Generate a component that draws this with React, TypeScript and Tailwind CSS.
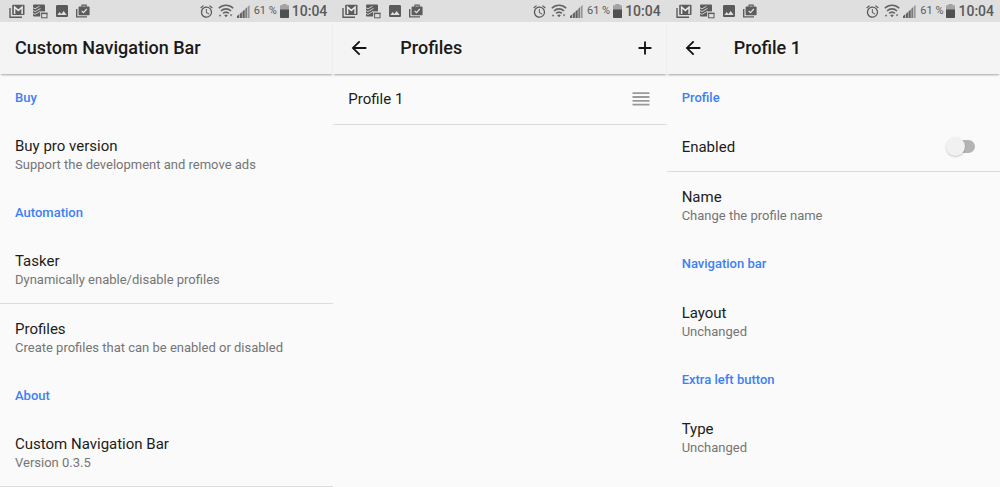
import React, { useState } from 'react';
import { MdAdd, MdAlarm, MdArrowBack, MdImage } from 'react-icons/md';

/* Status bar icons */

const MailStackIcon = () => (
  <svg width="16" height="15" viewBox="0 0 16 15" fill="none" aria-hidden="true">
    <path d="M1 4V13.3H13" stroke="#5c5c5c" strokeWidth="1.4" />
    <rect x="3.2" y="0.8" width="12.3" height="10.2" rx="0.8" fill="#5c5c5c" />
    <path d="M5.6 10V3.2L9.35 6.4L13.1 3.2V10" stroke="#e8e8e8" strokeWidth="1.5" />
  </svg>
);

const TodoIcon = () => (
  <svg width="15" height="15" viewBox="0 0 15 15" fill="none" aria-hidden="true">
    <rect x="0" y="0.5" width="12" height="12" rx="1" fill="#5c5c5c" />
    <path
      d="M0 3.8L2 4.8L6.5 2.2M0 6.6L2 7.6L7.6 4.4M0 9.4L2 10.4L7.4 7.2"
      stroke="#dadada"
      strokeWidth="0.9"
    />
    <rect x="7.2" y="7.4" width="7.8" height="7.6" fill="#dfdfdf" />
    <rect x="8.6" y="9.4" width="5.4" height="4.4" stroke="#5c5c5c" />
    <path d="M8.1 9.4H14.5" stroke="#5c5c5c" strokeWidth="1.4" />
  </svg>
);

const ShopCheckIcon = () => (
  <svg width="14" height="14" viewBox="0 0 14 14" fill="none" aria-hidden="true">
    <path d="M0.7 5V12.9H11" stroke="#5c5c5c" strokeWidth="1.4" />
    <path d="M6 2.8V1.1H10.2V2.8" stroke="#5c5c5c" strokeWidth="1.2" />
    <rect x="2.6" y="2.6" width="11" height="8.6" rx="0.8" fill="#5c5c5c" />
    <path d="M5.6 6.8L7.5 8.7L10.8 5" stroke="#e4e4e4" strokeWidth="1.2" />
  </svg>
);

const WifiIcon = () => (
  <svg width="16" height="14" viewBox="0 0 16 14" fill="none" aria-hidden="true">
    <g stroke="#636363" strokeWidth="1.6">
      <path d="M0.8 4.2C4.8 0.2 11.2 0.2 15.2 4.2" />
      <path d="M3 7C5.8 4.2 10.2 4.2 13 7" />
      <path d="M5.1 9.4C6.8 7.9 9.2 7.9 10.9 9.4" />
    </g>
    <path d="M6.2 11.2C7.2 10.3 8.8 10.3 9.8 11.2L8 13.2Z" fill="#636363" />
    <path d="M2 10.2L3.4 12.2H0.8ZM13 12.4L11.8 10.4H14.4Z" fill="#636363" />
  </svg>
);

const SignalIcon = () => (
  <svg width="13" height="13" viewBox="0 0 13 13" aria-hidden="true">
    <path d="M0 13V11L2 9.5V13ZM2.7 13V9L4.9 7V13ZM5.5 13V6.4L7.7 4.4V13Z" fill="#5f5f5f" />
    <path d="M8.3 13V3.8L10 2.3V13Z" fill="#7a7a7a" />
    <path d="M10.6 13V1.7L12.6 0V13Z" fill="#979797" />
  </svg>
);

const BatteryIcon = () => (
  <svg width="9" height="14" viewBox="0 0 9 14" aria-hidden="true">
    <path d="M2.4 0H6.6V1.3H9V6H0V1.3H2.4Z" fill="#a3a3a3" />
    <path d="M0 5.6H9V13.2Q9 14 8.2 14H0.8Q0 14 0 13.2Z" fill="#505050" />
  </svg>
);

const DragHandleIcon = () => (
  <svg width="18" height="14" viewBox="0 0 18 14" aria-hidden="true">
    <path d="M0.5 1.2H17.5M0.5 5H17.5M0.5 8.8H17.5M0.5 12.6H17.5" stroke="#9a9a9a" strokeWidth="1.8" />
  </svg>
);

const StatusBar = () => (
  <div className="flex h-[22px] items-center bg-[#dfdfdf] pl-[9px] pr-1.5 text-[#5a5a5a]">
    <div className="flex items-center gap-2">
      <MailStackIcon />
      <TodoIcon />
      <MdImage size={16} className="-mx-0.5" />
      <ShopCheckIcon />
    </div>
    <div className="ml-auto flex items-center">
      <MdAlarm size={15} />
      <div className="ml-1 flex items-center gap-[3px]">
        <WifiIcon />
        <SignalIcon />
      </div>
      <span className="ml-1 text-[11px] leading-4">61 %</span>
      <div className="ml-[3px] flex items-center gap-[3px]">
        <BatteryIcon />
        <span className="text-[14px] font-medium leading-4">10:04</span>
      </div>
    </div>
  </div>
);

interface ScreenProps {
  title: string;
  back?: boolean;
  action?: React.ReactNode;
  children: React.ReactNode;
}

const Screen: React.FC<ScreenProps> = ({ title, back, action, children }) => (
  <section className="flex min-w-0 flex-col">
    <StatusBar />
    <header className="flex h-[52px] items-center bg-[#f4f4f4] px-[15px] shadow-[0_2px_2px_-1px_rgba(0,0,0,0.35)]">
      {back && (
        <button type="button" aria-label="Back" className="mr-[30px] text-[#111]">
          <MdArrowBack size={22} />
        </button>
      )}
      <h1 className="text-[18px] font-medium leading-6 text-[#1a1a1a]">{title}</h1>
      {action && <div className="-mr-1 ml-auto flex">{action}</div>}
    </header>
    {children}
  </section>
);

const Category = ({ title, tall }: { title: string; tall?: boolean }) => (
  <h2
    className={`px-[15px] text-[13px] font-medium text-[#3d80f5] ${
      tall ? 'leading-[48px]' : 'leading-[47px]'
    }`}
  >
    {title}
  </h2>
);

interface PreferenceProps {
  title: string;
  summary: string;
  divider?: boolean;
}

const Preference: React.FC<PreferenceProps> = ({ title, summary, divider }) => (
  <button
    type="button"
    className={`h-[68px] w-full px-[15px] text-left ${
      divider ? 'border-b border-[#dcdcdc]' : ''
    }`}
  >
    <span className="block text-[15px] leading-5 text-[#1c1c1c]">{title}</span>
    <span className="block text-[13px] leading-[18px] text-[#757575]">{summary}</span>
  </button>
);

export default function App() {
  const [enabled, setEnabled] = useState(false);

  return (
    <main className="grid min-h-screen grid-cols-3 bg-[#fafafa] font-['Roboto',sans-serif]">
      <Screen title="Custom Navigation Bar">
        <Category title="Buy" />
        <Preference title="Buy pro version" summary="Support the development and remove ads" />
        <Category title="Automation" />
        <Preference title="Tasker" summary="Dynamically enable/disable profiles" divider />
        <Preference title="Profiles" summary="Create profiles that can be enabled or disabled" />
        <Category title="About" />
        <Preference title="Custom Navigation Bar" summary="Version 0.3.5" divider />
      </Screen>

      <Screen
        title="Profiles"
        back
        action={
          <button type="button" aria-label="Add profile" className="text-[#111]">
            <MdAdd size={22} />
          </button>
        }
      >
        <div className="flex h-[51px] items-center justify-between border-b border-[#dcdcdc] pl-[15px] pr-[17px]">
          <span className="text-[15px] leading-5 text-[#1c1c1c]">Profile 1</span>
          <DragHandleIcon />
        </div>
      </Screen>

      <Screen title="Profile 1" back>
        <Category title="Profile" tall />
        <label className="flex h-[50px] items-center justify-between border-b border-[#dcdcdc] pl-[15px] pr-[25px]">
          <span className="text-[15px] leading-5 text-[#1c1c1c]">Enabled</span>
          <span className="relative flex h-5 w-[29px] items-center">
            <input
              type="checkbox"
              role="switch"
              checked={enabled}
              onChange={(e) => setEnabled(e.target.checked)}
              className="peer ml-1 h-[13px] w-[25px] appearance-none rounded-full bg-[#b4b4b4] checked:bg-[#a5c4fa]"
            />
            <span className="pointer-events-none absolute left-0 size-[19px] rounded-full bg-[#f1f1f1] shadow-[0_1px_2px_rgba(0,0,0,0.2)] transition-transform peer-checked:translate-x-2.5 peer-checked:bg-[#3d80f5]" />
          </span>
        </label>
        <Preference title="Name" summary="Change the profile name" />
        <Category title="Navigation bar" tall />
        <Preference title="Layout" summary="Unchanged" />
        <Category title="Extra left button" tall />
        <Preference title="Type" summary="Unchanged" />
      </Screen>
    </main>
  );
}
